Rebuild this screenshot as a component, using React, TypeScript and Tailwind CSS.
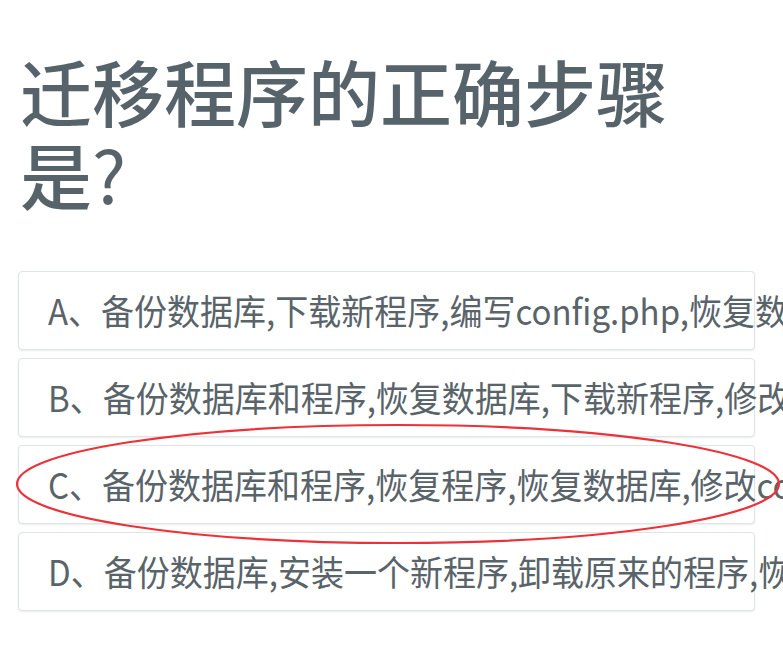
import React from "react";

const options = [
  "A、备份数据库,下载新程序,编写config.php,恢复数据库",
  "B、备份数据库和程序,恢复数据库,下载新程序,修改config.php",
  "C、备份数据库和程序,恢复程序,恢复数据库,修改config.php",
  "D、备份数据库,安装一个新程序,卸载原来的程序,恢复数据库",
];

export default function App() {
  return (
    <div
      className="relative w-[783px] h-[665px] overflow-hidden bg-white"
      style={{ fontFamily: '"Noto Sans CJK SC", "Noto Sans", sans-serif' }}
    >
      <div className="pt-[48px] pl-[20px]">
        <h1 className="max-w-[700px] text-[72px] leading-[83px] font-medium text-[#56636a]">
          迁移程序的正确步骤是<span className="font-normal">?</span>
        </h1>
      </div>
      <div className="mt-[57px] ml-[18px] w-[737px] flex flex-col gap-[8px]">
        {options.map((o) => (
          <div
            key={o}
            className="h-[79px] flex items-center pl-[29px] border border-[#dfe4e4] rounded-[4px] shadow-[0_1px_2px_rgba(0,0,0,0.08)] bg-white whitespace-nowrap overflow-visible"
          >
            <span className="inline-block scale-y-[1.08] origin-center text-[33px] text-[#59646a]">{o}</span>
          </div>
        ))}
      </div>
      <svg
        className="absolute left-0 top-0 pointer-events-none"
        width="783"
        height="665"
        viewBox="0 0 783 665"
      >
        <ellipse cx="398" cy="484" rx="381" ry="59" fill="none" stroke="#ec3238" strokeWidth="2.2" />
      </svg>
    </div>
  );
}
